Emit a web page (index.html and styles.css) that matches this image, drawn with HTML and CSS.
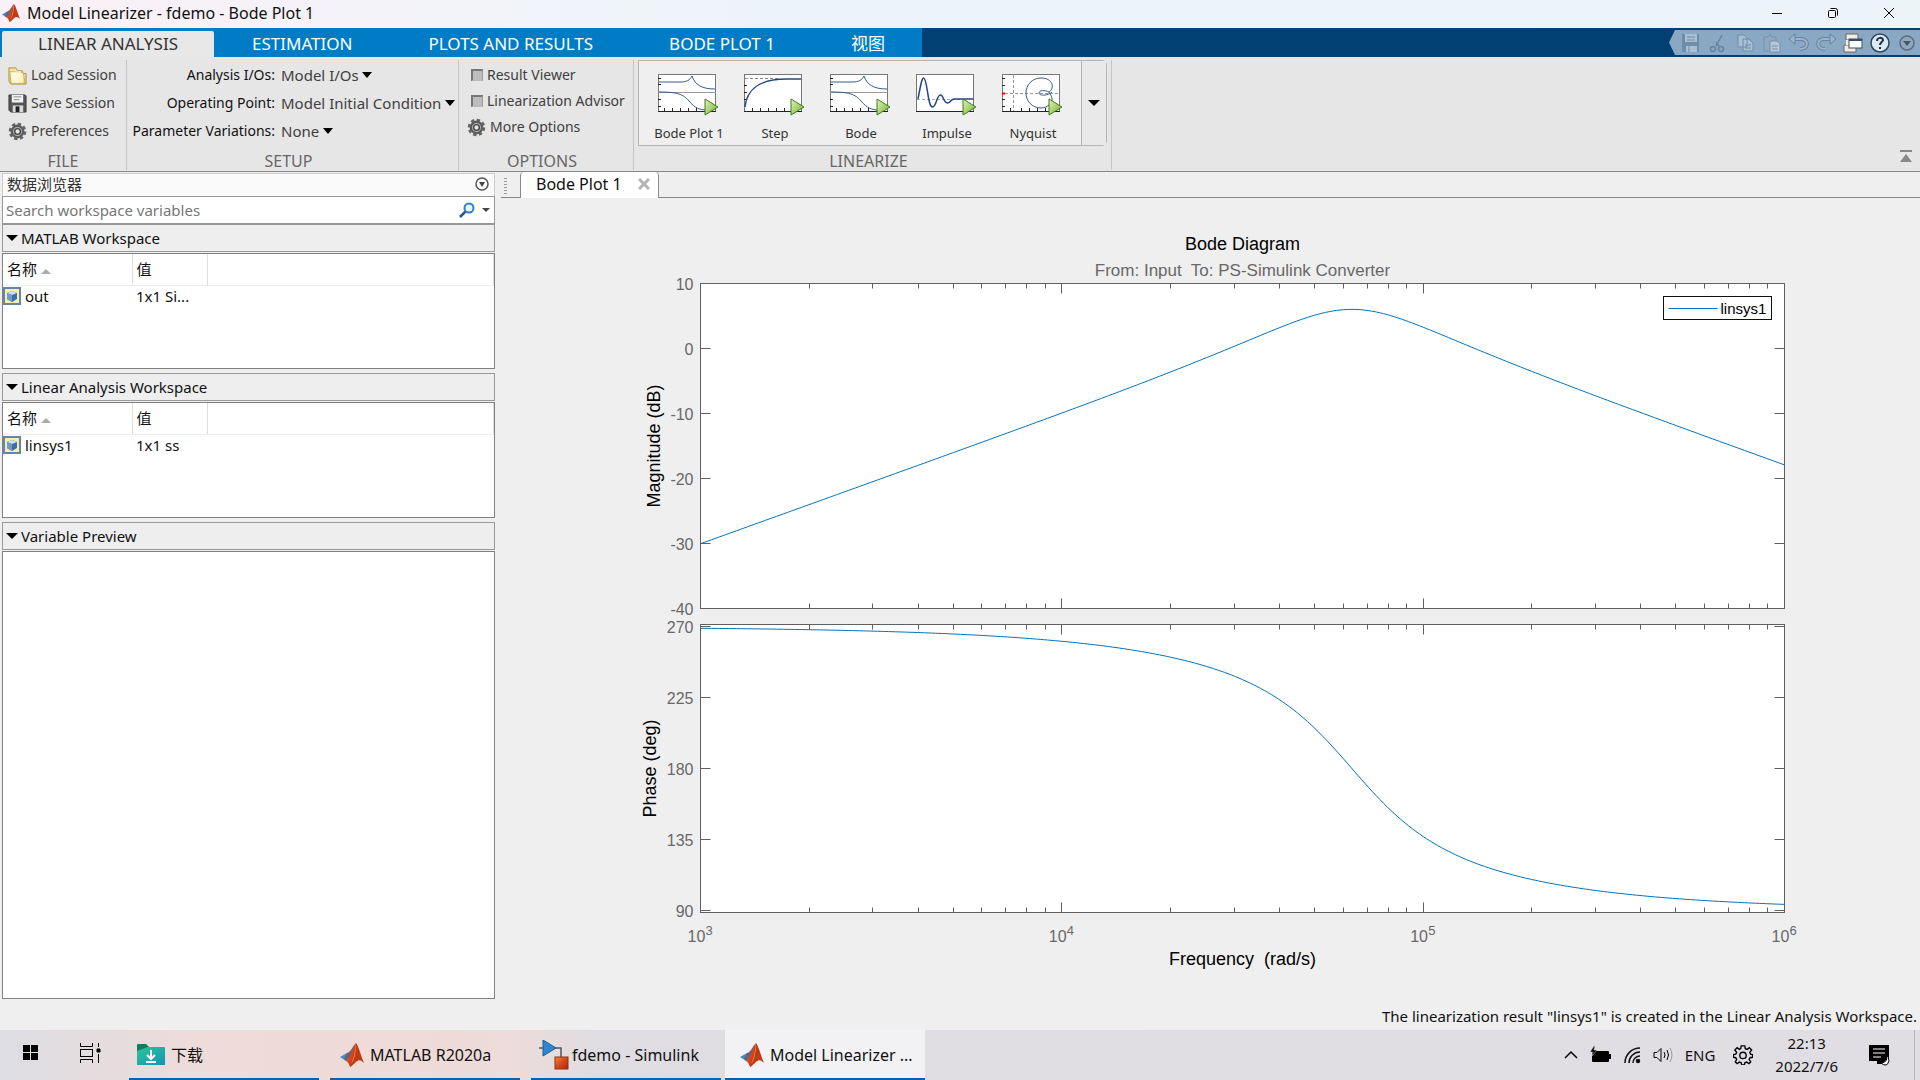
FILE: index.html
```html
<!DOCTYPE html>
<html lang="zh-CN">
<head>
    <meta charset="utf-8">
    <title>Model Linearizer - fdemo - Bode Plot 1</title>
    <link rel="stylesheet" href="styles.css">
</head>
<body>
    <!-- Shared icon shapes -->
    <svg class="sprite" aria-hidden="true">
        <defs>
            <linearGradient id="gOrange" x1="0" y1="0" x2="1" y2="1">
                <stop offset="0" stop-color="#f08a3c"/><stop offset="0.5" stop-color="#d9481c"/><stop offset="1" stop-color="#a82a10"/>
            </linearGradient>
            <linearGradient id="gGreen" x1="0" y1="0" x2="1" y2="1">
                <stop offset="0" stop-color="#e4f5b8"/><stop offset="1" stop-color="#6fae2c"/>
            </linearGradient>
            <linearGradient id="gFolder" x1="0" y1="0" x2="1" y2="1">
                <stop offset="0" stop-color="#fffef0"/><stop offset="1" stop-color="#e6cf6a"/>
            </linearGradient>
            <linearGradient id="gDownload" x1="0" y1="0" x2="1" y2="1">
                <stop offset="0" stop-color="#2cc69a"/><stop offset="1" stop-color="#1593b4"/>
            </linearGradient>
        </defs>
        <symbol id="matlab" viewBox="0 0 24 24">
            <path d="M0 14l7-4 4 4-5 4z" fill="#3d8fcb"/>
            <path d="M7 10c4-1 5-6 9-10l-5 14-5 4-2-2z" fill="#6d5f74"/>
            <path d="M6 18c5-3 6-12 10-18-1 7-2 13-1 20-2 1-3 3-5 4-1-3-2-5-4-6z" fill="url(#gOrange)"/>
            <path d="M16 0c3 4 5 13 8 20-3-3-5-4-8-1-2 1-4 4-6 5 3-7 4-16 6-24z" fill="#c13a17"/>
            <path d="M16 1c-1 5-1 12-5 20 3-3 5-12 5-20z" fill="#f9b04a"/>
        </symbol>
        <symbol id="folder" viewBox="0 0 20 20">
            <path d="M1 2h7l2 3h5v3h4v11H3L1 16z" fill="#f3e5a0" stroke="#a98d3c"/>
            <path d="M2 6l14 1 2 11-15 0z" fill="url(#gFolder)" stroke="#c9ae4c"/>
            <path d="M3 7l10-2 1 2 2 2v9H4z" fill="#fffce6" opacity=".7"/>
        </symbol>
        <symbol id="floppy" viewBox="0 0 20 20">
            <path d="M1 1h17l1 1v17H3l-2-2z" fill="#555" stroke="#3c3c3c"/>
            <path d="M4 1h12v8H4z" fill="#f2f2f2"/><path d="M6 3h8M6 6h6" stroke="#888"/>
            <path d="M5 12h11v7H5z" fill="#d9d9d9"/><path d="M8 13h4v6H8z" fill="#222"/>
        </symbol>
        <symbol id="gear" viewBox="0 0 20 20">
            <circle cx="10" cy="10" r="8" fill="none" stroke="#666" stroke-width="2.500" stroke-dasharray="3.600 2.683"/>
            <circle cx="10" cy="10" r="6" fill="#b5b5b5" stroke="#5c5c5c" stroke-width="2.500"/>
            <circle cx="10" cy="10" r="3" fill="#e6e6e6" stroke="#444" stroke-width="1.500"/>
        </symbol>
        <symbol id="run" viewBox="0 0 15 18">
            <path d="M1 1l13 8-13 8z" fill="url(#gGreen)" stroke="#3f7a1d"/>
        </symbol>
        <symbol id="bode" viewBox="0 0 62 46">
            <rect x=".5" y="2.500" width="57" height="37" fill="#fff" stroke="#777"/>
            <path d="M0 20.500h58" stroke="#999"/>
            <path d="M0 39.500h58M6.500 39v-3M14.500 39v-3M22.500 39v-3M30.500 39v-3M38.500 39v-3M0 6.500h3M0 12.500h3M0 27.500h3M0 34.500h3" stroke="#222"/>
            <path d="M1 10h21c7 0 10-2 12-6 3 9 10 13 23 13M1 20c18 0 24 2 30 9s10 9 19 9" fill="none" stroke="#345a92"/>
            <use href="#run" x="46" y="26" width="15" height="18"/>
        </symbol>
        <symbol id="step" viewBox="0 0 62 46">
            <rect x=".5" y="2.500" width="57" height="37" fill="#fff" stroke="#777"/>
            <path d="M0 39.500h58M8.500 39v-3M16.500 39v-3M24.500 39v-3M32.500 39v-3M40.500 39v-3M0 13.500h3M0 20.500h3M0 27.500h3" stroke="#222"/>
            <path d="M1 6.500h35" stroke="#888" stroke-dasharray="3 2"/>
            <path d="M1 35c2-18 14-28 42-28h14" fill="none" stroke="#23477f" stroke-width="1.500"/>
            <use href="#run" x="46" y="26" width="15" height="18"/>
        </symbol>
        <symbol id="impulse" viewBox="0 0 62 46">
            <rect x=".5" y="2.500" width="57" height="37" fill="#fff" stroke="#777"/>
            <path d="M0 39.500h58" stroke="#222"/>
            <path d="M1 27.500h48" stroke="#aaa" stroke-dasharray="3 2"/>
            <path d="M2 27C5 11 6 6 7.500 6c4 0 4 29 9 29 4 0 4-12 8-12 3 0 3 8 7 8 3 0 3-4 7-4h19" fill="none" stroke="#23477f" stroke-width="1.500"/>
            <use href="#run" x="46" y="26" width="15" height="18"/>
        </symbol>
        <symbol id="nyquist" viewBox="0 0 62 46">
            <rect x=".5" y="2.500" width="57" height="37" fill="#fff" stroke="#777"/>
            <path d="M0 39.500h58M8.500 39v-3M19.500 39v-3M27.500 39v-3M35.500 39v-3M43.500 39v-3M0 6.500h3M0 13.500h3M0 27.500h3M0 34.500h3" stroke="#222"/>
            <path d="M0 21.500h3" stroke="#f00" stroke-width="2"/>
            <path d="M11.500 3v36M3 21.500h54" stroke="#999" stroke-dasharray="3 2"/>
            <path d="M50 20c-4 4-13 4-13 1 0-3 6-3 10-1M47 20c6-4 4-14-8-14-9 0-15 7-15 15s6 15 15 15c6 0 12-5 11-10-1-3-2-4-3-6" fill="none" stroke="#345a92"/>
            <use href="#run" x="46" y="26" width="15" height="18"/>
        </symbol>
        <symbol id="cube" viewBox="0 0 18 18">
            <rect x="1" y="1" width="16" height="16" fill="#f6efac" stroke="#6485a5" stroke-width="2"/>
            <path d="M4 6l5-2 5 2v6l-5 3-5-3z" fill="#3c6da8"/>
            <path d="M4 6l5-2 5 2-5 2z" fill="#cde0f4"/><path d="M4 6l5 2v7l-5-3z" fill="#6f9bcf"/>
        </symbol>
    </svg>

    <header class="titlebar">
        <svg class="app-icon"><use href="#matlab"/></svg>
        <h1>Model Linearizer - fdemo - Bode Plot 1</h1>
        <div class="window-buttons">
            <button aria-label="Minimize"><svg width="12" height="12"><path d="M1 6.500h10" stroke="#000"/></svg></button>
            <button aria-label="Restore"><svg width="12" height="12" fill="none" stroke="#000"><rect x="1.500" y="3.500" width="7" height="7" rx="1"/><path d="M3.500 1.500h5q2 0 2 2v5"/></svg></button>
            <button aria-label="Close"><svg width="12" height="12"><path d="M1 1l10 10M11 1L1 11" stroke="#000"/></svg></button>
        </div>
    </header>

    <nav class="tabs">
        <button class="tab active">LINEAR ANALYSIS</button>
        <button class="tab">ESTIMATION</button>
        <button class="tab">PLOTS AND RESULTS</button>
        <button class="tab">BODE PLOT 1</button>
        <button class="tab">视图</button>
        <div class="quick-access">
            <button aria-label="Save"><svg viewBox="0 0 20 20"><path d="M1 1h17v18H1z" fill="#6f8da9"/><path d="M4 1h12v8H4zM5 13h11v6H5z" fill="#a9c0d4"/><path d="M6 4h8M6 7h8M8 13v6" stroke="#6f8da9"/></svg></button>
            <button aria-label="Cut"><svg viewBox="0 0 20 20" fill="none" stroke="#68849f" stroke-width="1.500"><path d="M14 2L8 13M8 9l4 5"/><circle cx="5" cy="16" r="2.500"/><circle cx="13" cy="16" r="2.500"/></svg></button>
            <button aria-label="Copy"><svg viewBox="0 0 20 20" fill="#a9c0d4" stroke="#6f8da9"><path d="M3 2h6l3 3v9H3zM8 6h6l4 4v8H8z"/><path d="M10 12h6M10 15h6"/></svg></button>
            <button aria-label="Paste"><svg viewBox="0 0 20 20" fill="#8fa9c1" stroke="#7592ad"><path d="M2 4h4l2-3 2 3h4v14H2z"/><path d="M8 8h7l3 3v8H8z" fill="#b4c9da"/><path d="M10 13h6M10 16h6"/></svg></button>
            <button aria-label="Undo"><svg viewBox="0 0 20 20"><path d="M5 6h7c8 0 8 10-1 10" fill="none" stroke="#68849f" stroke-width="4"/><path d="M5 6h7c8 0 8 10-1 10" fill="none" stroke="#9db5ca" stroke-width="2"/><path d="M6 1v10L0 6z" fill="#9db5ca" stroke="#68849f"/></svg></button>
            <button aria-label="Redo"><svg viewBox="0 0 20 20"><path d="M15 6H8c-8 0-8 10 1 10" fill="none" stroke="#68849f" stroke-width="4"/><path d="M15 6H8c-8 0-8 10 1 10" fill="none" stroke="#9db5ca" stroke-width="2"/><path d="M14 1v10l6-5z" fill="#9db5ca" stroke="#68849f"/></svg></button>
            <button aria-label="Switch windows"><svg viewBox="0 0 20 20"><path d="M3 1h12v6H3zM1 12h12v7H1z" fill="#f4ece2" stroke="#73655c"/><path d="M3 7h4v5H3z" fill="#eee"/><rect x="6" y="6" width="13" height="9" fill="#fff" stroke="#33506e"/><path d="M6 7h13" stroke="#33506e" stroke-width="2"/></svg></button>
            <button aria-label="Help"><svg viewBox="0 0 20 20"><circle cx="10" cy="10" r="9" fill="#dceaf5" stroke="#31485c" stroke-width="1.500"/><path d="M7 8c0-4 6-4 6-1 0 2-3 2-3 5M10 14v2" fill="none" stroke="#1d2f40" stroke-width="2"/></svg></button>
            <button aria-label="More"><svg viewBox="0 0 20 20"><circle cx="10" cy="10" r="7" fill="none" stroke="#5f6d7a" stroke-width="1.500"/><path d="M6 8h8l-4 5z" fill="#4a555f"/></svg></button>
        </div>
    </nav>

    <section class="toolstrip">
        <div class="group file">
            <div class="rows">
                <button class="tool"><svg><use href="#folder"/></svg>Load Session</button>
                <button class="tool"><svg><use href="#floppy"/></svg>Save Session</button>
                <button class="tool"><svg><use href="#gear"/></svg>Preferences</button>
            </div>
            <h2>FILE</h2>
        </div>
        <div class="group setup">
            <div class="fields">
                <label for="ios">Analysis I/Os:</label>
                <span class="drop"><select id="ios"><option>Model I/Os</option></select></span>
                <label for="op">Operating Point:</label>
                <span class="drop"><select id="op"><option>Model Initial Condition</option></select></span>
                <label for="pv">Parameter Variations:</label>
                <span class="drop"><select id="pv"><option>None</option></select></span>
            </div>
            <h2>SETUP</h2>
        </div>
        <div class="group options">
            <div class="rows">
                <label class="check"><input type="checkbox">Result Viewer</label>
                <label class="check"><input type="checkbox">Linearization Advisor</label>
                <button class="tool"><svg><use href="#gear"/></svg>More Options</button>
            </div>
            <h2>OPTIONS</h2>
        </div>
        <div class="group linearize">
            <div class="gallery">
                <button><svg><use href="#bode"/></svg>Bode Plot 1</button>
                <button><svg><use href="#step"/></svg>Step</button>
                <button><svg><use href="#bode"/></svg>Bode</button>
                <button><svg><use href="#impulse"/></svg>Impulse</button>
                <button><svg><use href="#nyquist"/></svg>Nyquist</button>
                <button class="more" aria-label="Show more"><i class="arrow"></i></button>
            </div>
            <h2>LINEARIZE</h2>
        </div>
        <button class="collapse" aria-label="Collapse toolstrip"><svg width="12" height="12" fill="#888"><path d="M0 0h12v2H0zM6 4l6 8H0z"/></svg></button>
    </section>

    <main>
        <aside>
            <div class="browser-title">
                <h2>数据浏览器</h2>
                <button aria-label="Panel menu"><svg width="14" height="14"><circle cx="7" cy="7" r="6" fill="none" stroke="#555" stroke-width="1.500"/><path d="M4 5h6L7 10z" fill="#444"/></svg></button>
            </div>
            <div class="search">
                <input type="text" aria-label="Search workspace variables" placeholder="Search workspace variables">
                <svg width="16" height="16"><path d="M7 9l-6 6" stroke="#3a4f8c" stroke-width="2.500"/><circle cx="10" cy="6" r="4.500" fill="#eaf4fd" stroke="#2f7fc9" stroke-width="2"/></svg>
                <i class="arrow small"></i>
            </div>
            <h3 class="section"><i class="arrow"></i>MATLAB Workspace</h3>
            <div class="box">
                <table>
                    <thead><tr><th class="name">名称<i class="sort"></i></th><th class="value">值</th><th></th></tr></thead>
                    <tbody><tr><td><span class="var"><svg><use href="#cube"/></svg>out</span></td><td>1x1 Si...</td><td></td></tr></tbody>
                </table>
            </div>
            <h3 class="section"><i class="arrow"></i>Linear Analysis Workspace</h3>
            <div class="box">
                <table>
                    <thead><tr><th class="name">名称<i class="sort"></i></th><th class="value">值</th><th></th></tr></thead>
                    <tbody><tr><td><span class="var"><svg><use href="#cube"/></svg>linsys1</span></td><td>1x1 ss</td><td></td></tr></tbody>
                </table>
            </div>
            <h3 class="section"><i class="arrow"></i>Variable Preview</h3>
            <div class="box preview"></div>
        </aside>
        <section class="document">
            <div class="doc-tabs">
                <span class="grip"></span>
                <button class="doc-tab">Bode Plot 1<svg width="12" height="12"><path d="M1 1l10 10M11 1L1 11" stroke="#b4b4b4" stroke-width="3"/></svg></button>
                <span class="doc-line"></span>
            </div>
            <svg id="plot" role="img" aria-label="Bode Diagram"></svg>
        </section>
    </main>
    <p class="status">The linearization result "linsys1" is created in the Linear Analysis Workspace.</p>

    <footer class="taskbar">
        <button class="start" aria-label="Start"><svg width="16" height="16"><path d="M0 0h7v7H0zM8 0h7v7H8zM0 8h7v7H0zM8 8h7v7H8z"/></svg></button>
        <button class="view" aria-label="Task view"><svg width="22" height="20" fill="none" stroke="#000"><path d="M1.500 0v3.500h12V0M1.500 20v-3.500h12V20" /><rect x="1.500" y="6.500" width="12" height="7"/><path d="M19.500 0v4M19.500 11v9"/><path d="M18 6h3v3h-3z" fill="#000"/></svg></button>
        <button class="task"><svg width="28" height="22"><path d="M0 1q0-1 1-1h8l3 3v5H0z" fill="#0f7f5c"/><path d="M0 7l11-4h16q1 0 1 1v17H0z" fill="url(#gDownload)"/><path d="M14 6v8M10 11l4 4 4-4M9 18h10" fill="none" stroke="#fff" stroke-width="2"/></svg>下载</button>
        <button class="task matlab"><svg width="24" height="24"><use href="#matlab"/></svg>MATLAB R2020a</button>
        <button class="task simulink"><svg width="30" height="30"><path d="M0 8h22v10" fill="none" stroke="#555" stroke-width="1.500"/><path d="M4 0l13 8L4 16z" fill="#2f86cf" stroke="#1d5c94"/><rect x="16" y="17" width="13" height="12" fill="url(#gOrange)" stroke="#8f3010"/></svg>fdemo - Simulink</button>
        <button class="task active"><svg width="24" height="24"><use href="#matlab"/></svg>Model Linearizer ...</button>
        <div class="tray">
            <svg width="14" height="10" fill="none" stroke="#000" stroke-width="1.500"><path d="M1 8l6-6 6 6"/></svg>
            <svg width="22" height="18"><path d="M3 5h15q1 0 1 1v2h2v5h-2v2q0 1-1 1H3q-1 0-1-1V6q0-1 1-1z"/><path d="M4 0L0 6h3L2 10l5-6H4l1-4z" stroke="#e0dee2" stroke-width=".5"/></svg>
            <svg width="17" height="17" fill="none" stroke="#111" stroke-width="1.500"><path d="M1 16A15 15 0 0 1 16 1M5 16A11 11 0 0 1 16 5M9 16a7 7 0 0 1 7-7"/><circle cx="14" cy="14" r="1.500" fill="#000"/></svg>
            <svg width="20" height="16" fill="none" stroke="#000"><path d="M1 5.500h3l4-4v13l-4-4H1z"/><path d="M11 5q2 3 0 6M14 3q3 5 0 10"/><path d="M17 1q4 7 0 14" stroke="#999"/></svg>
            <span>ENG</span>
            <svg class="tray-gear" width="20" height="20" viewBox="0 0 22 22" fill="none" stroke="#000" stroke-width="1.500"><path d="M9 1h4l.5 3 2 .8L18 3l2.500 2.500L18.500 8l.8 2 2.200.5v3l-2.700.5-1 2 1.700 2.500-2 2-2.500-1.700-2 .8-.5 2.400h-3l-.5-2.400-2-.8L4.500 20.500l-2-2L4 16l-1-2-2.500-.5v-3L3 10l1-2-2-2.500L4.500 3 7 4.800l1.500-.8z"/><circle cx="11" cy="11.500" r="3.500"/></svg>
            <time>22:13<br>2022/7/6</time>
            <svg width="22" height="22"><path d="M1 1h20v14q-4 0-5 5h-7v-3H1z"/><path d="M5 5h12M5 9h12M5 13h8" stroke="#fff"/><path d="M18 11q3 7-5 8 6 5 8-2 0-4-3-6z" fill="#fff" stroke="#000"/></svg>
        </div>
    </footer>
    <script src="plot.js"></script>
</body>
</html>
```
FILE: styles.css
```css
* {
    box-sizing: border-box;
}

body {
    margin: 0;
    min-height: 100vh;
    display: flex;
    flex-direction: column;
    background: #efefef;
    color: #111;
    font-family: 'Noto Sans', 'Noto Sans CJK SC', sans-serif;
    font-size: 15px;
    line-height: 20px;
}

h1, h2, h3, p {
    margin: 0;
    font-size: 15px;
    font-weight: normal;
}

button, select, input {
    margin: 0;
    padding: 0;
    border: 0;
    background: none;
    color: inherit;
    font: inherit;
}

.sprite {
    position: absolute;
    width: 0;
    height: 0;
}

.arrow {
    flex: none;
    border: 6px solid transparent;
    border-top-color: #000;
    border-bottom: 0;
}

.arrow.small {
    border-width: 4px;
    border-bottom: 0;
    border-top-color: #444;
}

/* Title bar */
.titlebar {
    display: flex;
    align-items: center;
    height: 28px;
    padding: 0 3px 2px 0;
    background: linear-gradient(90deg, #faf0f5, #f3f3f9 20%, #ebf4f8 45%, #ebf5f8);
}

.titlebar h1 {
    font-size: 16px;
}

.app-icon {
    width: 18px;
    height: 18px;
    margin: 0 7px 0 2px;
}

.window-buttons {
    display: flex;
    margin-left: auto;
}

.window-buttons button {
    width: 56px;
    height: 26px;
}

/* Tabs */
.tabs {
    display: flex;
    height: 29px;
    padding-left: 2px;
    background: linear-gradient(90deg, #007cc7 922px, #004073 922px);
}

.tab {
    padding: 2px 38px 0;
    color: #fff;
    font-size: 17px;
}

.tab.active {
    margin-top: 3px;
    padding: 0 36px;
    border-radius: 2px 2px 0 0;
    background: #e8e8e8;
    color: #333;
}

.quick-access {
    display: flex;
    align-items: center;
    gap: 7px;
    height: 25px;
    margin: 2px 0 0 auto;
    padding: 0 3px 0 12px;
    background: #8aa8c3;
    clip-path: polygon(6px 0, 100% 0, 100% 100%, 6px 100%, 0 50%);
}

.quick-access button, .quick-access svg {
    display: block;
    width: 20px;
    height: 20px;
}

/* Toolstrip */
.toolstrip {
    display: flex;
    height: 115px;
    padding: 3px 0 1px;
    border-bottom: 1px solid #888;
    background: #e6e6e6;
}

.group {
    display: flex;
    flex-direction: column;
    justify-content: space-between;
    border-right: 1px solid #c4c4c4;
}

.group h2 {
    padding-right: 8px;
    color: #666;
    font-size: 16px;
    line-height: 18px;
    text-align: center;
}

.rows {
    display: flex;
    flex-direction: column;
    align-items: flex-start;
    gap: 8px;
    padding-top: 5px;
    color: #404040;
    font-size: 14px;
}

.file {
    width: 127px;
    padding-left: 8px;
}

.tool {
    display: flex;
    align-items: center;
    gap: 4px;
    white-space: nowrap;
}

.tool svg {
    width: 19px;
    height: 19px;
}

.setup {
    width: 332px;
}

.fields {
    display: grid;
    grid-template-columns: 148px auto;
    gap: 8px 6px;
    padding-top: 5px;
    white-space: nowrap;
}

.fields label {
    font-size: 14px;
    text-align: right;
}

.drop {
    display: flex;
    align-items: center;
    color: #404040;
}

.drop select {
    appearance: none;
}

.drop::after {
    content: "";
    margin-left: 3px;
    border: 5px solid transparent;
    border-top: 6px solid #000;
    border-bottom: 0;
}

.options {
    width: 175px;
    padding-left: 8px;
}

.options .rows {
    gap: 6px;
}

.options h2 {
    padding-right: 16px;
}

.check {
    display: flex;
    align-items: center;
    gap: 4px;
    padding-left: 4px;
    white-space: nowrap;
}

.check input {
    appearance: none;
    width: 12px;
    height: 12px;
    border: 2px solid #777;
    border-right: 1px solid #999;
    border-bottom: 1px solid #bbb;
    background: #bdbdbd;
}

.linearize {
    padding: 0 4px;
}

.gallery {
    display: flex;
    height: 86px;
    padding-left: 7px;
    border: 1px solid #b4b4b4;
    border-radius: 0 5px 5px 0;
    background: #efefef;
}

.gallery button {
    display: flex;
    flex-direction: column;
    align-items: center;
    gap: 5px;
    width: 86px;
    padding-top: 11px;
    color: #333;
    font-size: 13px;
    white-space: nowrap;
}

.gallery svg {
    width: 62px;
    height: 46px;
}

.gallery .more {
    justify-content: center;
    width: 25px;
    margin-left: 5px;
    padding: 0;
    border-left: 1px solid #b4b4b4;
    background: #e9e9e9;
}

.collapse {
    align-self: flex-end;
    margin: 0 8px 4px auto;
}

/* Data browser */
main {
    flex: 1;
    display: flex;
}

aside {
    display: flex;
    flex-direction: column;
    width: 495px;
    padding: 1px 0 0 2px;
}

.browser-title {
    display: flex;
    align-items: center;
    justify-content: space-between;
    height: 23px;
    padding: 0 5px 2px 4px;
    border: 1px solid #ccc;
    border-bottom: 0;
    background: #fafafa;
    color: #333;
}

.browser-title button, .browser-title svg {
    display: block;
}

.search {
    display: flex;
    align-items: center;
    gap: 7px;
    height: 28px;
    padding: 0 4px 0 3px;
    border: 1px solid #999;
    background: #fff;
}

.search input {
    flex: 1;
    outline: 0;
}

.search input::placeholder {
    color: #777;
}

.section {
    display: flex;
    align-items: center;
    gap: 3px;
    height: 28px;
    margin-bottom: 1px;
    padding-left: 3px;
    border: 1px solid #999;
    background: #eee;
}

.box {
    height: 116px;
    margin-bottom: 4px;
    border: 1px solid #808080;
    background: #fff;
}

.preview {
    flex: 1;
    margin-bottom: 1px;
}

table {
    width: 100%;
    border-collapse: collapse;
    table-layout: fixed;
}

th {
    height: 31px;
    padding: 0 4px;
    border-right: 1px solid #ddd;
    border-bottom: 1px solid #eee;
    font-weight: normal;
    text-align: left;
}

.name {
    width: 129px;
}

.value {
    width: 75px;
}

td {
    height: 20px;
    padding: 0 0 0 4px;
}

td:first-child {
    padding: 0;
}

.sort {
    display: inline-block;
    margin-left: 4px;
    border: 5px solid transparent;
    border-top: 0;
    border-bottom-color: #aaa;
    vertical-align: middle;
}

.var {
    display: flex;
    align-items: center;
    gap: 4px;
}

.var svg {
    width: 18px;
    height: 18px;
}

/* Document area */
.document {
    flex: 1;
    display: flex;
    flex-direction: column;
    min-width: 0;
    padding-left: 6px;
}

.doc-tabs {
    display: flex;
    height: 26px;
}

.grip {
    width: 19px;
    border-bottom: 1px solid #888;
    background: repeating-linear-gradient(#999 0 1px, transparent 1px 3px) 3px 6px / 3px 16px no-repeat;
}

.doc-tab {
    display: flex;
    align-items: center;
    gap: 16px;
    padding: 0 8px 2px 15px;
    border: 1px solid #888;
    border-width: 0 1px;
    border-radius: 4px 4px 0 0;
    background: #fff;
    font-size: 16px;
    white-space: nowrap;
}

.doc-line {
    flex: 1;
    border-bottom: 1px solid #888;
}

#plot {
    flex: 1;
    width: 100%;
    min-height: 500px;
    font-family: 'Liberation Sans', Arial, sans-serif;
    font-size: 16px;
}

#plot .axes {
    fill: #fff;
    stroke: #606060;
}

#plot .ticks {
    fill: none;
    stroke: #606060;
}

#plot .curve {
    fill: none;
    stroke: #0072bd;
}

#plot .legend {
    fill: #fff;
    stroke: #111;
}

#plot .legend-label {
    font-size: 15px;
}

#plot .tick-label, #plot .subtitle {
    fill: #686868;
}

#plot .subtitle {
    font-size: 17px;
}

#plot .exponent {
    font-size: 13px;
}

#plot .label {
    fill: #000;
    font-size: 18px;
}

.status {
    height: 30px;
    padding: 6px 3px 0;
    text-align: right;
}

/* Taskbar */
.taskbar {
    display: flex;
    height: 50px;
    background: linear-gradient(90deg, #dcdde3, #eedcda 10%, #efdbd7 22%, #ecdcdb 27%, #dfdde1 31%, #e0dee2);
}

.start {
    width: 60px;
}

.start svg {
    margin-left: 2px;
}

.view {
    width: 60px;
    margin-right: 9px;
}

.task {
    display: flex;
    align-items: center;
    gap: 6px;
    width: 190px;
    margin-right: 11px;
    padding: 2px 8px 0;
    border-bottom: 2px solid #0b62ad;
    font-size: 16px;
    white-space: nowrap;
}

.task:first-of-type {
    font-size: 15px;
}

.matlab {
    padding-left: 10px;
}

.simulink {
    gap: 3px;
    margin-right: 4px;
}

.task.active {
    width: 200px;
    padding-left: 15px;
    background: #f2f1f3;
}

.tray {
    display: flex;
    align-items: center;
    gap: 12px;
    margin-left: auto;
    margin-right: 5px;
    padding-right: 24px;
    border-right: 1px solid #b8b8bc;
}

.tray-gear {
    margin: 0 10px 0 6px;
}

time {
    line-height: 23px;
    margin-right: 18px;
    text-align: center;
}
```
FILE: plot.js
```js
// Band-pass system: H = A / (1 + jQ(w/w0 - w0/w)), phase starts at 270 deg
const w0 = 63500;
const A = 2;
const Q = 1;

const svg = document.getElementById("plot");

function add(tag, attrs, text) {
    const el = document.createElementNS("http://www.w3.org/2000/svg", tag);
    for (const key in attrs) {
        el.setAttribute(key, attrs[key]);
    }
    if (text) {
        el.textContent = text;
    }
    svg.appendChild(el);
    return el;
}

function drawAxes(left, top, width, height, toY, yTicks) {
    const right = left + width;
    const bottom = top + height;
    add("rect", { class: "axes", x: left, y: top, width: width, height: height });

    let d = "";
    for (let decade = 0; decade < 3; decade++) {
        for (let k = 1; k < 10; k++) {
            if (decade === 0 && k === 1) continue;
            const x = Math.floor(left + width * (decade + Math.log10(k)) / 3) + 0.5;
            const len = k === 1 ? 10 : 5;
            d += `M${x} ${top}v${len}M${x} ${bottom}v${-len}`;
        }
    }
    for (const value of yTicks) {
        const y = Math.floor(toY(value)) + 0.5;
        d += `M${left} ${y}h10M${right} ${y}h-10`;
        add("text", { class: "tick-label", x: left - 7, y: y + 6, "text-anchor": "end" }, String(value));
    }
    add("path", { class: "ticks", d: d });
}

function drawCurve(left, width, toY, fn) {
    let points = "";
    for (let i = 0; i <= 300; i++) {
        const w = Math.pow(10, 3 + i / 100);
        points += `${(left + width * i / 300).toFixed(2)},${toY(fn(w)).toFixed(2)} `;
    }
    add("polyline", { class: "curve", points: points });
}

function draw() {
    const w = svg.clientWidth;
    const h = svg.clientHeight;
    svg.textContent = "";

    const left = 199.5;
    const width = w - left - 135.5;
    const top = 85.5;
    const inner = h - top - 87.5 - 16;
    const magH = Math.round(inner * 0.53);
    const phTop = top + magH + 16;
    const phH = inner - magH;
    const mid = left + width / 2;

    const magY = v => top + (10 - v) / 50 * magH;
    const phY = v => phTop + (271.5 - v) / 183 * phH;
    const x = v => Q * (v / w0 - w0 / v);

    drawAxes(left, top, width, magH, magY, [10, 0, -10, -20, -30, -40]);
    drawCurve(left, width, magY, v => 20 * Math.log10(A / Math.sqrt(1 + x(v) * x(v))));
    drawAxes(left, phTop, width, phH, phY, [270, 225, 180, 135, 90]);
    drawCurve(left, width, phY, v => 180 - Math.atan(x(v)) * 180 / Math.PI);

    for (let i = 0; i <= 3; i++) {
        const px = left + width * i / 3;
        const py = phTop + phH + 29;
        add("text", { class: "tick-label", x: px - 13, y: py }, "10");
        add("text", { class: "tick-label exponent", x: px + 5, y: py - 7 }, String(i + 3));
    }

    add("text", { class: "label", x: mid, y: top - 34, "text-anchor": "middle" }, "Bode Diagram");
    add("text", { class: "subtitle", x: mid, y: top - 8, "text-anchor": "middle" }, "From: Input\u00a0 To: PS-Simulink Converter");
    add("text", { class: "label", x: mid, y: phTop + phH + 52, "text-anchor": "middle" }, "Frequency\u00a0 (rad/s)");

    const magMid = top + magH / 2;
    const phMid = phTop + phH / 2;
    add("text", { class: "label", x: 159, y: magMid, "text-anchor": "middle", transform: `rotate(-90 159 ${magMid})` }, "Magnitude (dB)");
    add("text", { class: "label", x: 155, y: phMid, "text-anchor": "middle", transform: `rotate(-90 155 ${phMid})` }, "Phase (deg)");

    const lx = left + width - 121;
    add("rect", { class: "legend", x: lx, y: top + 13, width: 108, height: 23 });
    add("path", { class: "curve", d: `M${lx + 5} ${top + 25}h49` });
    add("text", { class: "legend-label", x: lx + 57, y: top + 30 }, "linsys1");
}

draw();
window.addEventListener("resize", draw);
```
